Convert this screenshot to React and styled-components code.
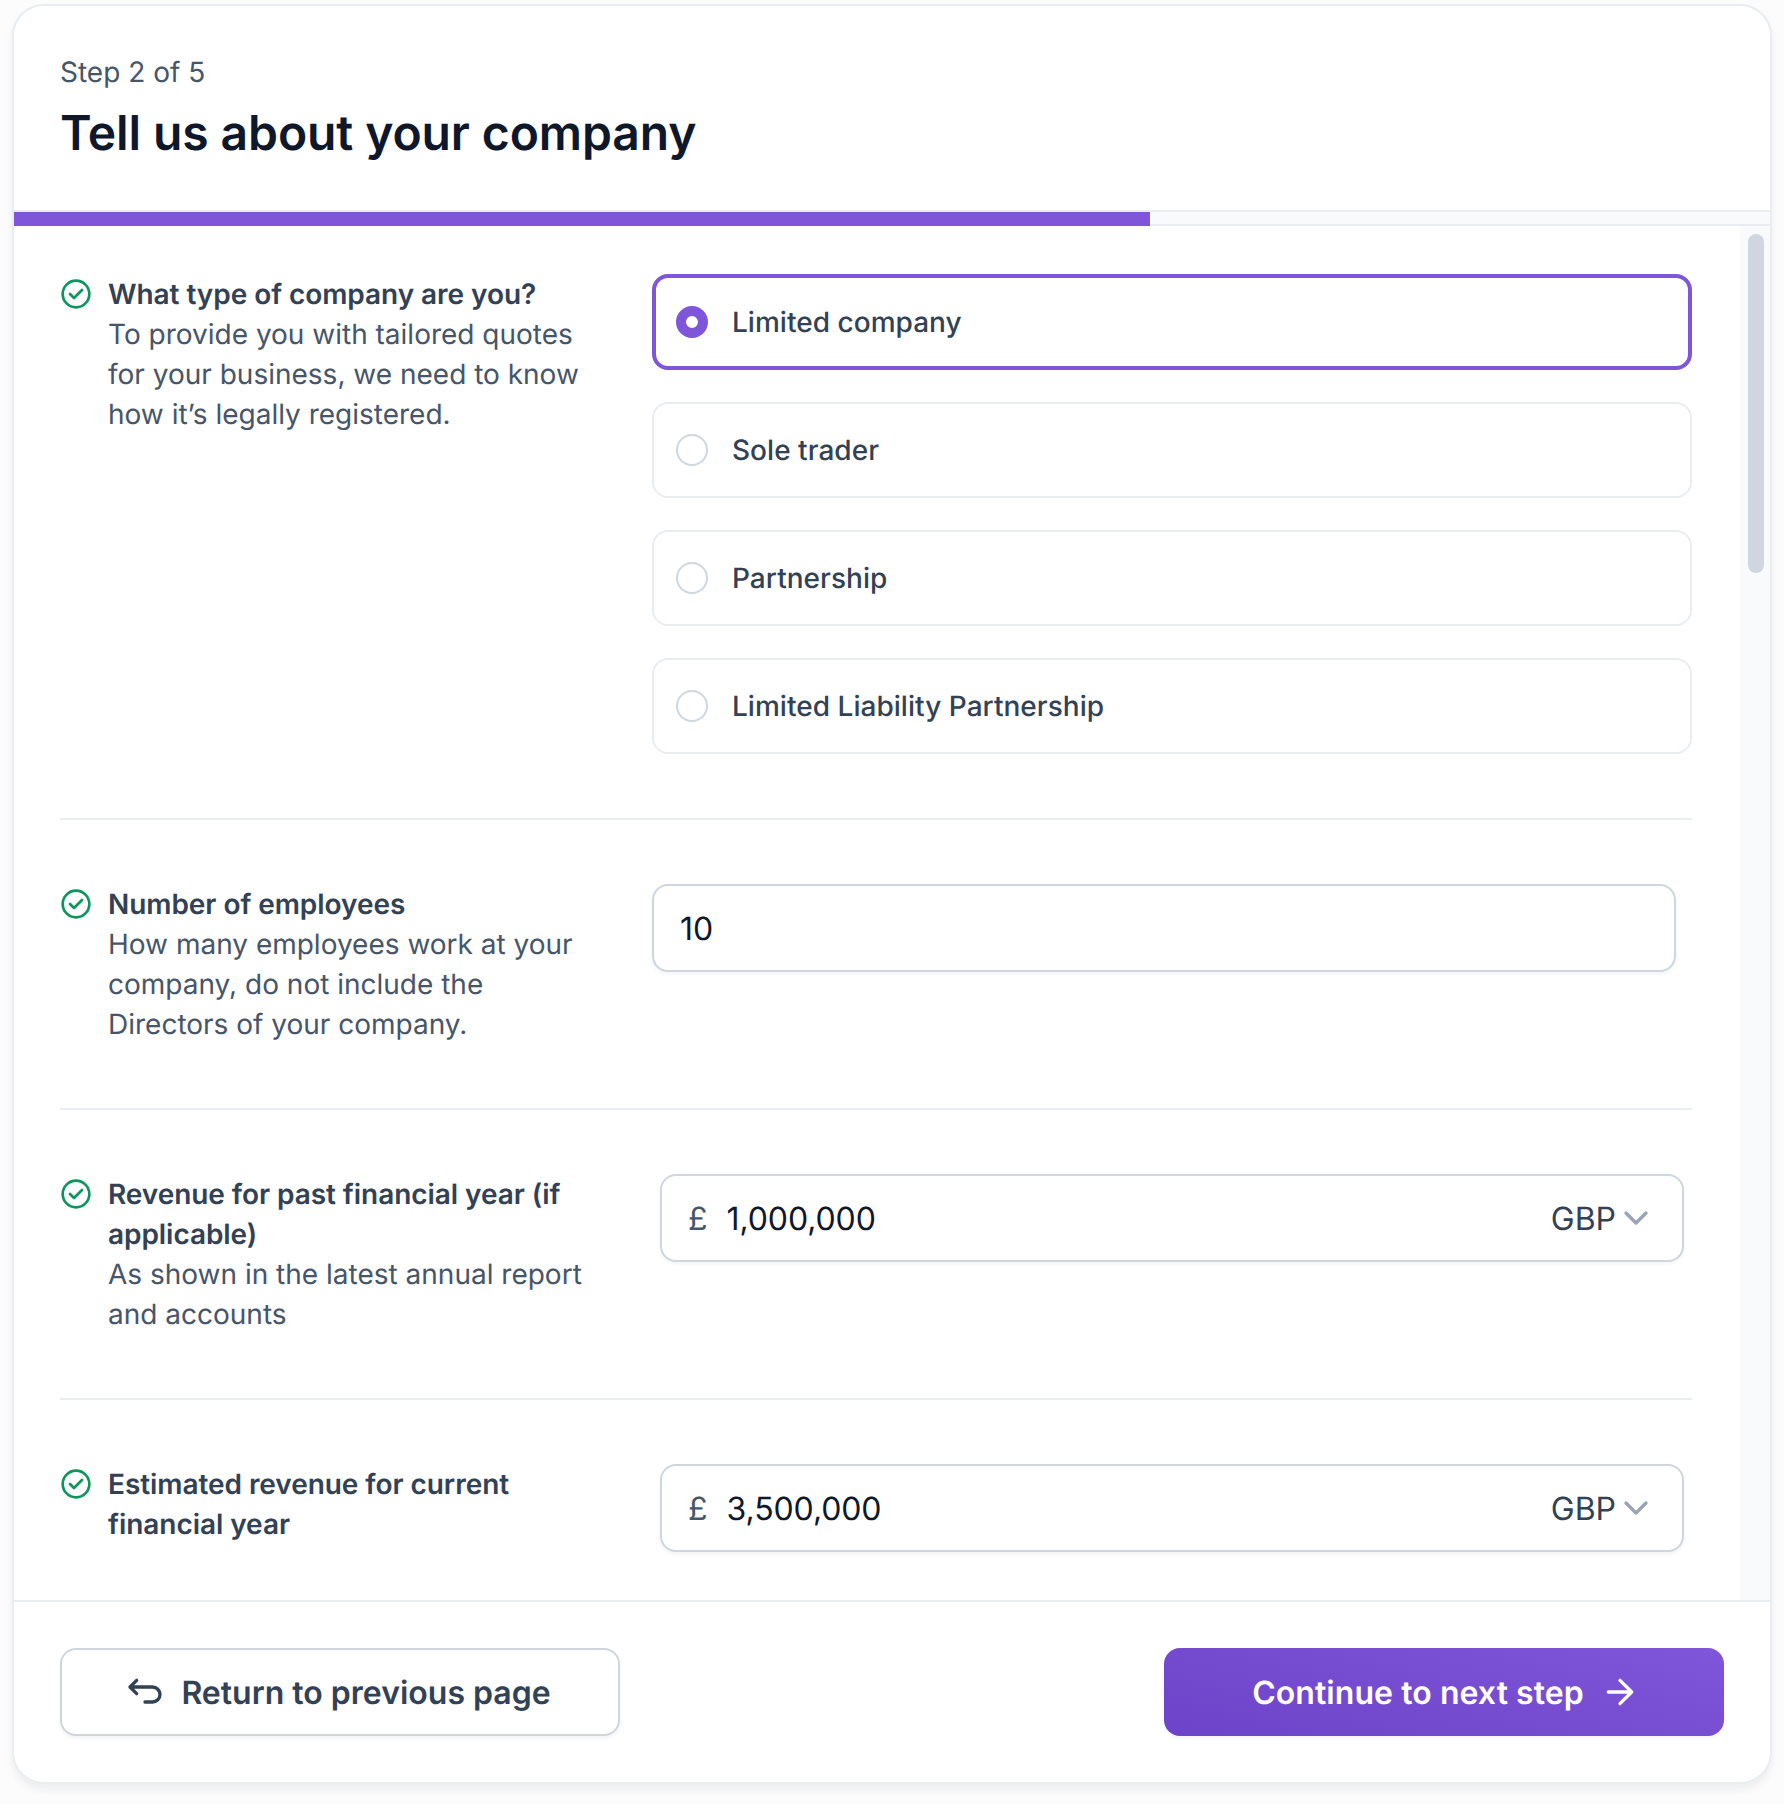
import React, { useState } from 'react'
import styled, { createGlobalStyle, css } from 'styled-components'

const color = {
  page: '#fcfcfc',
  white: '#ffffff',
  gray50: '#f9fafc',
  gray200: '#e9edf1',
  gray300: '#cfd6df',
  gray400: '#9ca3b5',
  gray600: '#475569',
  gray700: '#334155',
  gray900: '#0f172a',
  purple: '#7f56d9',
  purpleDark: '#6d44c9',
  green: '#0d965c',
}

const GlobalStyle = createGlobalStyle`
  * {
    box-sizing: border-box;
  }
  body {
    margin: 0;
    background: ${color.page};
    font-family: Inter, 'Liberation Sans', sans-serif;
    font-optical-sizing: none;
    text-rendering: geometricPrecision;
    -webkit-font-smoothing: antialiased;
  }
  input, button {
    font: inherit;
    letter-spacing: inherit;
    text-rendering: inherit;
  }
`

const Page = styled.main`
  height: 1804px;
  padding: 4px 12px 20px;
  overflow: hidden;
`

const Card = styled.section`
  display: flex;
  flex-direction: column;
  height: 100%;
  border: 2px solid ${color.gray200};
  border-radius: 32px;
  background: ${color.white};
  box-shadow: 0 6px 8px rgba(20, 10, 20, 0.06);
  overflow: hidden;
`

const Header = styled.header`
  flex: none;
  height: 206px;
  padding: 46px 46px 0;
  border-bottom: 2px solid ${color.gray200};
`

const StepText = styled.p`
  margin: 0;
  font-size: 28px;
  line-height: 40px;
  color: ${color.gray600};
`

const Title = styled.h1`
  margin: 11px 0 0;
  font-size: 48px;
  font-weight: 600;
  line-height: 60px;
  letter-spacing: -0.1px;
  color: ${color.gray900};
`

const Progress = styled.div`
  flex: none;
  height: 14px;
  background: ${color.gray50};
  box-shadow: inset 0 -2px 0 ${color.gray200};
`

const ProgressFill = styled.div`
  height: 100%;
  background: ${color.purple};
`

const Body = styled.div`
  display: flex;
  flex: 1;
  min-height: 0;
`

const Form = styled.form`
  flex: 1;
  padding: 48px 48px 0 46px;
  overflow: hidden;
`

const Scrollbar = styled.div`
  width: 30px;
  padding: 8px 6px 8px 8px;
  background: ${color.gray50};
`

const Thumb = styled.div`
  height: 339px;
  border-radius: 8px;
  background: ${color.gray300};
`

const Section = styled.section`
  display: grid;
  grid-template-columns: 592px 1fr;
  padding-bottom: 64px;
  & + & {
    padding-top: 64px;
    border-top: 2px solid ${color.gray200};
  }
`

const Question = styled.div`
  display: flex;
  gap: 16px;
  font-size: 28px;
  line-height: 40px;
  svg {
    flex: none;
    margin-top: 4px;
  }
`

const QuestionText = styled.div`
  width: 484px;
`

const Label = styled.h2`
  margin: 0;
  font-size: inherit;
  font-weight: 600;
  letter-spacing: -0.06px;
  color: ${color.gray700};
`

const Hint = styled.p`
  margin: 0;
  color: ${color.gray600};
`

const Options = styled.div`
  display: flex;
  flex-direction: column;
  gap: 32px;
`

const Option = styled.div`
  display: flex;
  align-items: center;
  gap: 24px;
  height: 96px;
  padding: 0 22px;
  border: 2px solid ${color.gray200};
  border-radius: 16px;
  font-size: 28px;
  font-weight: 500;
  letter-spacing: 0.03px;
  color: ${color.gray700};
  cursor: pointer;
  ${(props) => props.$selected && css`
    padding: 0 20px;
    border: 4px solid ${color.purple};
  `}
`

const Radio = styled.span`
  width: 32px;
  height: 32px;
  border: ${(props) => (props.$selected ? `10px solid ${color.purple}` : `2px solid ${color.gray300}`)};
  border-radius: 50%;
`

const Field = styled.div`
  display: flex;
  align-items: center;
  width: 1024px;
  height: 88px;
  margin-left: ${(props) => (props.$inset ? '8px' : '0')};
  padding: 0 26px;
  border: 2px solid ${color.gray300};
  border-radius: 16px;
  background: ${color.white};
  box-shadow: 0 2px 4px rgba(16, 24, 40, 0.05);
  font-size: 32px;
  color: ${color.gray900};
`

const Currency = styled.span`
  margin-right: 19px;
  color: ${color.gray600};
`

const Input = styled.input`
  flex: 1;
  min-width: 0;
  padding: 0;
  border: 0;
  outline: 0;
  background: transparent;
  letter-spacing: -0.1px;
  color: inherit;
`

const Unit = styled.span`
  display: flex;
  align-items: center;
  color: ${color.gray700};
`

const Footer = styled.footer`
  display: flex;
  flex: none;
  align-items: flex-start;
  justify-content: space-between;
  height: 182px;
  padding: 46px 46px 0;
  border-top: 2px solid ${color.gray200};
`

const Button = styled.button`
  display: flex;
  align-items: center;
  justify-content: center;
  gap: 16px;
  width: 560px;
  height: 88px;
  padding: 0 4px 0 0;
  border: 2px solid ${color.gray300};
  border-radius: 16px;
  background: ${color.white};
  box-shadow: 0 2px 4px rgba(16, 24, 40, 0.05);
  font-size: 32px;
  font-weight: 600;
  color: ${color.gray700};
  ${(props) => props.$primary && css`
    padding: 0 0 0 4px;
    border: 0;
    background: linear-gradient(14deg, ${color.purpleDark}, ${color.purple});
    letter-spacing: 0.06px;
    color: ${color.white};
  `}
`

const Icon = ({ size = 40, children }) => (
  <svg
    width={size}
    height={size}
    viewBox="0 0 24 24"
    fill="none"
    stroke="currentColor"
    strokeWidth="2"
    strokeLinecap="round"
    strokeLinejoin="round"
  >
    {children}
  </svg>
)

const CheckIcon = styled((props) => (
  <span className={props.className}>
    <Icon size={32}>
      <circle cx="12" cy="12" r="10" />
      <path d="M7.5 12L10.5 15L16.5 9" />
    </Icon>
  </span>
))`
  flex: none;
  color: ${color.green};
  height: 40px;
`

const ChevronIcon = styled((props) => (
  <span className={props.className}>
    <Icon><path d="M6 9L12 15L18 9" /></Icon>
  </span>
))`
  display: flex;
  color: ${color.gray400};
`

const QuestionSection = ({ label, hint, children }) => (
  <Section>
    <Question>
      <CheckIcon />
      <QuestionText>
        <Label>{label}</Label>
        {hint && <Hint>{hint}</Hint>}
      </QuestionText>
    </Question>
    {children}
  </Section>
)

const MoneyField = ({ value }) => (
  <Field $inset>
    <Currency>£</Currency>
    <Input defaultValue={value} />
    <Unit>GBP<ChevronIcon /></Unit>
  </Field>
)

const companyTypes = ['Limited company', 'Sole trader', 'Partnership', 'Limited Liability Partnership']

const App = () => {
  const [type, setType] = useState(companyTypes[0])

  return (
    <Page>
      <GlobalStyle />
      <Card>
        <Header>
          <StepText>Step 2 of 5</StepText>
          <Title>Tell us about your company</Title>
        </Header>
        <Progress>
          <ProgressFill style={{ width: `${(1136 / 1756) * 100}%` }} />
        </Progress>
        <Body>
          <Form>
            <QuestionSection
              label="What type of company are you?"
              hint="To provide you with tailored quotes for your business, we need to know how it’s legally registered."
            >
              <Options>
                {companyTypes.map((name) => (
                  <Option key={name} $selected={name === type} onClick={() => setType(name)}>
                    <Radio $selected={name === type} />
                    {name}
                  </Option>
                ))}
              </Options>
            </QuestionSection>
            <QuestionSection
              label="Number of employees"
              hint="How many employees work at your company, do not include the Directors of your company."
            >
              <Field>
                <Input defaultValue="10" />
              </Field>
            </QuestionSection>
            <QuestionSection
              label="Revenue for past financial year (if applicable)"
              hint="As shown in the latest annual report and accounts"
            >
              <MoneyField value="1,000,000" />
            </QuestionSection>
            <QuestionSection label="Estimated revenue for current financial year">
              <MoneyField value="3,500,000" />
            </QuestionSection>
          </Form>
          <Scrollbar>
            <Thumb />
          </Scrollbar>
        </Body>
        <Footer>
          <Button type="button">
            <Icon>
              <path d="M3 9H16.5C18.9853 9 21 11.0147 21 13.5C21 15.9853 18.9853 18 16.5 18H12M3 9L7 5M3 9L7 13" />
            </Icon>
            Return to previous page
          </Button>
          <Button type="button" $primary>
            Continue to next step
            <Icon><path d="M5 12H19M12 5L19 12L12 19" /></Icon>
          </Button>
        </Footer>
      </Card>
    </Page>
  )
}

export default App
